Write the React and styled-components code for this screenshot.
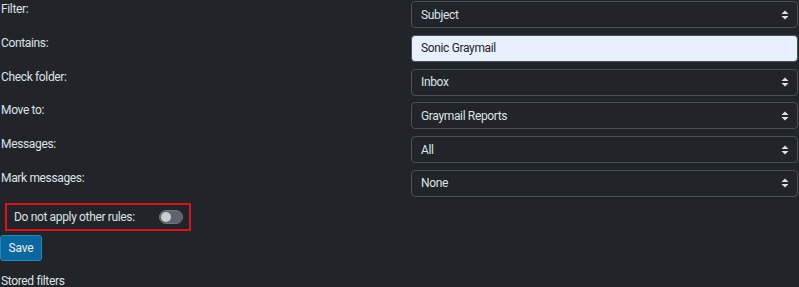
import React from 'react';
import styled, {createGlobalStyle} from 'styled-components';

const Global = createGlobalStyle`
  body {
    margin: 0;
    background: #212529;
    font-family: Roboto, "Liberation Sans", sans-serif;
    color: #dee2e6;
    overflow: hidden;
  }
`
const Page = styled.div`
  width: 799px;
  height: 287px;
  padding-top: 1px;
  box-sizing: border-box;
  font-size: 12px;
  letter-spacing: -0.35px;
`
const Row = styled.div`
  display: grid;
  grid-template-columns: 411px 387px;
  height: 33.8px;
`
const Label = styled.div`
  line-height: 14px;
  padding-top: 1px;
  padding-left: 1px;
`
const SelectBox = styled.div`
  height: 27px;
  box-sizing: border-box;
  border: 1px solid #495057;
  border-radius: 4px;
  background: ${p => p.$light ? '#e8f0fe' : '#212529'};
  color: ${p => p.$light ? '#212529' : '#dee2e6'};
  display: flex;
  align-items: center;
  justify-content: space-between;
  padding: 0 8px 0 9px;
`
const Arrows = styled.svg`
  width: 8px;
  height: 10px;
`
const ToggleBox = styled.div`
  margin: -1px 0 0 5px;
  width: 186px;
  height: 28px;
  box-sizing: border-box;
  border: 2px solid #d9121b;
  display: flex;
  align-items: center;
  justify-content: space-between;
  padding: 0 6px 0 7px;
`
const Switch = styled.div`
  width: 21px;
  height: 12px;
  border-radius: 7px;
  background: #5c636a;
  border: 1px solid #6c757d;
  display: flex;
  align-items: center;
  padding-left: 1px;
`
const Knob = styled.div`
  width: 10px;
  height: 10px;
  border-radius: 50%;
  background: #c9ced3;
`
const SaveButton = styled.button`
  margin-top: 4px;
  height: 26px;
  width: 42px;
  padding: 0;
  border: 1px solid #2783bd;
  border-radius: 3px;
  background: #0b689f;
  color: #e9f1f7;
  font-family: inherit;
  font-size: 12px;
  letter-spacing: -0.2px;
  display: block;
`
const Stored = styled.div`
  margin-top: 13px;
  line-height: 14px;
  padding-left: 1px;
`

const rows = [
  ['Filter:', 'Subject'],
  ['Contains:', 'Sonic Graymail', true],
  ['Check folder:', 'Inbox'],
  ['Move to:', 'Graymail Reports'],
  ['Messages:', 'All'],
  ['Mark messages:', 'None'],
];

export default function App() {
  return (
    <Page>
      <Global />
      {rows.map(([label, value, isInput]) => (
        <Row key={label}>
          <Label>{label}</Label>
          <SelectBox $light={isInput}>
            <span>{value}</span>
            {!isInput && (
              <Arrows viewBox="0 0 8 10">
                <path d="M4 0.5 L7.5 4 H0.5 Z M4 9.5 L7.5 6 H0.5 Z" fill="#dee2e6" />
              </Arrows>
            )}
          </SelectBox>
        </Row>
      ))}
      <ToggleBox>
        <span>Do not apply other rules:</span>
        <Switch><Knob /></Switch>
      </ToggleBox>
      <SaveButton>Save</SaveButton>
      <Stored>Stored filters</Stored>
    </Page>
  );
}
